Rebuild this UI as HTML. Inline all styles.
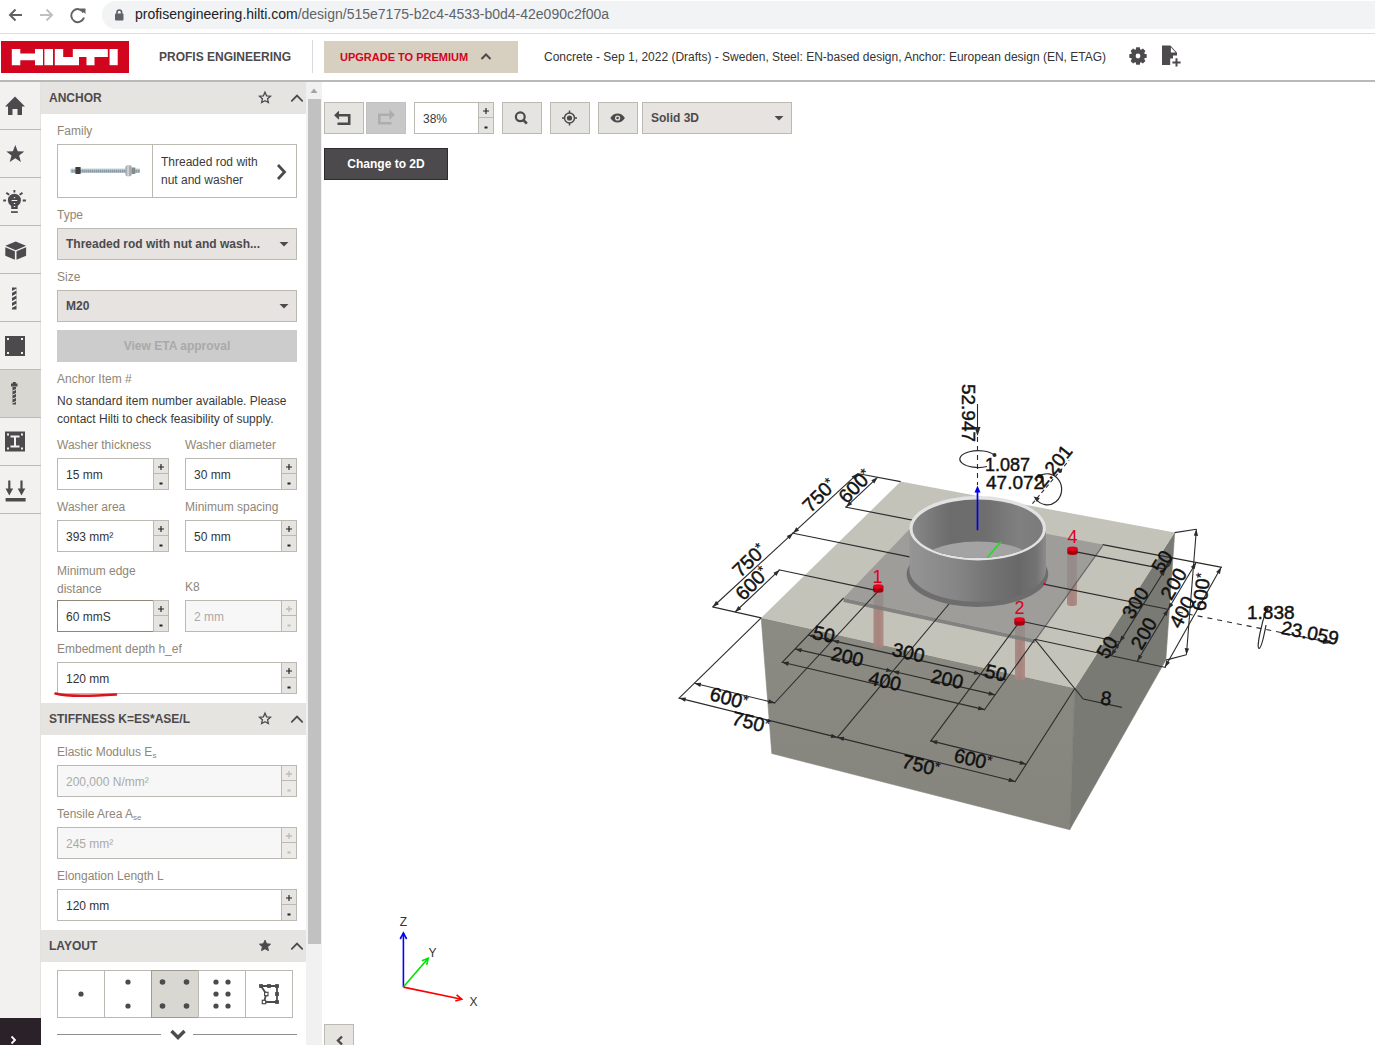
<!DOCTYPE html>
<html><head><meta charset="utf-8">
<style>
*{box-sizing:border-box;margin:0;padding:0}
html,body{width:1375px;height:1045px;overflow:hidden;background:#fff;font-family:"Liberation Sans",sans-serif;color:#333;position:relative;-webkit-font-smoothing:antialiased}
.a{position:absolute}
.chrome{left:0;top:0;width:1375px;height:34px;background:#fff;border-bottom:1px solid #dadce0}
.url{left:102px;top:1px;width:1290px;height:28px;border-radius:14px;background:#f1f3f4}
.urltxt{left:135px;top:6px;font-size:14px;color:#202124;white-space:nowrap;line-height:17px}
.urltxt span{color:#5f6368}
.hdr{left:0;top:34px;width:1375px;height:46px;background:#fff}
.hdrline{left:0;top:80px;width:1375px;height:2px;background:#b9b9b9}
.side{left:0;top:82px;width:41px;height:963px;background:#f2f1ef;border-right:1px solid #e4e2df}
.sep{left:0;width:41px;height:1px;background:#bdbbb7}
.panel{left:41px;top:82px;width:265px;height:963px;background:#fff}
.ph{left:41px;width:265px;height:32px;background:#e6e4e1}
.pht{left:49px;font-size:12px;font-weight:700;color:#4d4a4d;line-height:14px}
.lbl{font-size:12px;color:#8f8677;line-height:14px;white-space:nowrap}
.inp{background:#fff;border:1px solid #bcb8b2}
.val{font-size:12px;color:#3a3a3a;line-height:14px;white-space:nowrap}
.spin{background:#e6e4e1;border-left:1px solid #bcb8b2}
.spin i{position:absolute;left:0;width:100%;text-align:center;font-style:normal;font-weight:700;font-size:11px;color:#222;line-height:12px}
.dd{background:#e6e3e0;border:1px solid #bcb8b2}
.tb{background:#e6e4e1;border:1px solid #bcb8b2}
</style></head><body>

<!-- browser chrome -->
<div class="a chrome"></div>
<svg class="a" style="left:0;top:0" width="100" height="33" viewBox="0 0 100 33">
  <path d="M22 15H10.5M15.5 9.5L10 15l5.5 5.5" fill="none" stroke="#5f6368" stroke-width="2"/>
  <path d="M40 15h11.5M46.5 9.5L52 15l-5.5 5.5" fill="none" stroke="#bdc1c6" stroke-width="2"/>
  <path d="M83.5 12.5A6.5 6.5 0 1 0 84 17.5" fill="none" stroke="#5f6368" stroke-width="2"/>
  <path d="M80 8.5h5.5V14z" fill="#5f6368"/>
</svg>
<div class="a url"></div>
<svg class="a" style="left:113px;top:8px" width="12" height="14" viewBox="0 0 12 14">
  <rect x="2" y="5.5" width="8.5" height="7" rx="1" fill="#5f6368"/>
  <path d="M4 6V4.3a2.3 2.3 0 0 1 4.6 0V6" fill="none" stroke="#5f6368" stroke-width="1.6"/>
</svg>
<div class="a urltxt">profisengineering.hilti.com<span>/design/515e7175-b2c4-4533-b0d4-42e090c2f00a</span></div>

<!-- app header -->
<div class="a hdr"></div>
<div class="a" style="left:1px;top:41px;width:128px;height:32px;background:#d2051e"></div>
<svg class="a" style="left:1px;top:41px" width="128" height="32" viewBox="0 0 128 32">
  <g fill="#fff">
    <path d="M10.8 8h8.5v4.6H34V8h8v16.2h-8v-5H19.3v5h-8.5z"/>
    <rect x="43.4" y="8" width="8.6" height="16.2"/>
    <path d="M53.8 8h8.4v7.9h9.6V8h35v7.9h-13.3v8.3h-8v-8.3H78v8.3H53.8z"/>
    <rect x="108.6" y="8" width="8.1" height="16.2"/>
  </g>
</svg>
<div class="a" style="left:159px;top:50px;font-size:12px;font-weight:700;color:#4d4a4d;white-space:nowrap;line-height:14px">PROFIS ENGINEERING</div>
<div class="a" style="left:312px;top:40px;width:1px;height:33px;background:#d9dbe0"></div>
<div class="a" style="left:324px;top:41px;width:194px;height:32px;background:#d7cfc0"></div>
<div class="a" style="left:340px;top:50px;font-size:11px;font-weight:700;color:#d2051e;white-space:nowrap;line-height:14px">UPGRADE TO PREMIUM</div>
<svg class="a" style="left:479px;top:51px" width="14" height="10" viewBox="0 0 14 10"><path d="M2.5 8l4.5-4.5L11.5 8" fill="none" stroke="#4d4a4d" stroke-width="2"/></svg>
<div class="a" style="left:544px;top:50px;font-size:12px;color:#333;white-space:nowrap;line-height:14px">Concrete - Sep 1, 2022 (Drafts) - Sweden, Steel: EN-based design, Anchor: European design (EN, ETAG)</div>
<svg class="a" style="left:1128.6px;top:46.6px" width="18" height="18" viewBox="0 0 18 18"><path d="M6.76,2.47 L7.23,0.28 L10.77,0.28 L11.24,2.47 L12.03,2.80 L13.92,1.58 L16.42,4.08 L15.20,5.97 L15.53,6.76 L17.72,7.23 L17.72,10.77 L15.53,11.24 L15.20,12.03 L16.42,13.92 L13.92,16.42 L12.03,15.20 L11.24,15.53 L10.77,17.72 L7.23,17.72 L6.76,15.53 L5.97,15.20 L4.08,16.42 L1.58,13.92 L2.80,12.03 L2.47,11.24 L0.28,10.77 L0.28,7.23 L2.47,6.76 L2.80,5.97 L1.58,4.08 L4.08,1.58 L5.97,2.80Z M11.4,9 A2.4,2.4 0 1 0 6.6,9 A2.4,2.4 0 1 0 11.4,9Z" fill="#4d4a4d" fill-rule="evenodd"/></svg>
<svg class="a" style="left:1160px;top:44px" width="24" height="24" viewBox="0 0 24 24"><path d="M2 1.6h8.4L17 8.8v2.8h-4v3h-2.8V21H2z" fill="#4d4a4d"/><path d="M10.9 3.3v5.1h4.7z" fill="#fff"/><path d="M16.5 14.3v8.2M12.4 18.4h8.2" stroke="#4d4a4d" stroke-width="2"/></svg>
<div class="a hdrline"></div>

<!-- sidebar -->
<div class="a side"></div>
<div class="a" style="left:0;top:369px;width:41px;height:48px;background:#d8d7d2"></div>
<div class="a sep" style="top:129px"></div>
<div class="a sep" style="top:177px"></div>
<div class="a sep" style="top:225px"></div>
<div class="a sep" style="top:273px"></div>
<div class="a sep" style="top:321px"></div>
<div class="a sep" style="top:369px"></div>
<div class="a sep" style="top:417px"></div>
<div class="a sep" style="top:465px"></div>
<div class="a sep" style="top:513px"></div>
<div class="a" style="left:0;top:1018px;width:41px;height:27px;background:#2a2228"></div>


<svg class="a" style="left:0;top:82px" width="41" height="440" viewBox="0 0 41 440" fill="#4d4a4d">
  <!-- home: center (15,106) -> local y 24 -->
  <path d="M15 14.5L5 24.5h3v8.5h4.5v-6h5v6H22v-8.5h3z"/>
  <!-- star center (15,154)-> local 72 -->
  <path d="M15.3 63l2.4 6.2 6.6.3-5.2 4.1 1.8 6.4-5.6-3.7-5.6 3.7 1.8-6.4-5.2-4.1 6.6-.3z"/>
  <!-- bulb -->
  <g>
    <circle cx="14.4" cy="118.2" r="6.5"/>
    <rect x="11.2" y="121" width="6.5" height="6"/>
    <rect x="11" y="129.2" width="6.8" height="1.7"/>
    <path d="M14.4 108v2.6M6.3 110.9l2.9 1.9M22.5 110.9l-2.9 1.9M3.2 118.5H6M22.7 118.5h3.2" stroke="#4d4a4d" stroke-width="1.9"/>
    <path d="M11.6 118.5h5.6M13.8 115.7h1.4M13.8 121.5h1.4M13.8 124.5h1.4" stroke="#f2f1ef" stroke-width="1.1"/>
  </g>
  <!-- box center (15.7,250.7) local 168.7 -->
  <path d="M15.7 159.5l10.3 4.3-10.3 4.4-10.3-4.4z"/>
  <path d="M5.3 165.2l9.6 4.1v8.5l-9.6-4.1z"/>
  <path d="M26.1 165.2l-9.6 4.1v8.5l9.6-4.1z"/>
  <!-- drill center (14.5,298) local 216 -->
  <path d="M12 205.5h4.5v22H12z"/>
  <path d="M12 210l4.5-2.5M12 215l4.5-2.5M12 220l4.5-2.5M12 225l4.5-2.5" stroke="#f2f1ef" stroke-width="1.5"/>
  <!-- plate center (15,346) local 264 -->
  <rect x="5" y="254" width="20" height="20"/>
  <g fill="#f2f1ef"><rect x="7" y="256" width="2" height="2"/><rect x="21" y="256" width="2" height="2"/><rect x="7" y="270" width="2" height="2"/><rect x="21" y="270" width="2" height="2"/></g>
  <!-- anchor icon center (14.3,394) local 312 -->
  <rect x="11" y="301.5" width="6.5" height="3"/>
  <rect x="12.8" y="300" width="3" height="4"/>
  <path d="M12.5 305h3.5v17.5h-3.5z"/>
  <path d="M12.5 309l3.5-1.5M12.5 313l3.5-1.5M12.5 317l3.5-1.5M12.5 321l3.5-1.5" stroke="#d8d7d2" stroke-width="1"/>
  <!-- I-profile center (15,441.5) local 359.5 -->
  <rect x="5" y="349.5" width="20" height="20"/>
  <g fill="#f2f1ef"><rect x="7" y="351.5" width="2" height="2"/><rect x="21" y="351.5" width="2" height="2"/><rect x="7" y="365.5" width="2" height="2"/><rect x="21" y="365.5" width="2" height="2"/>
  <rect x="10.5" y="353.5" width="9" height="2"/><rect x="10.5" y="363.5" width="9" height="2"/><rect x="14" y="355" width="2" height="9"/></g>
  <!-- loads center (15.6,490.4) local 408 -->
  <rect x="5.6" y="416" width="20" height="3.5"/>
  <path d="M9.3 398.5v9M21.5 398.5v9" stroke="#4d4a4d" stroke-width="2.2"/>
  <path d="M5.5 406.5h7.6L9.3 413.5zM17.7 406.5h7.6l-3.8 7z"/>
</svg>
<svg class="a" style="left:0;top:1018px" width="41" height="27" viewBox="0 0 41 27"><path d="M11.5 18.5l3.5 3.5-3.5 3.5" fill="none" stroke="#fff" stroke-width="1.8"/></svg>

<!-- panel -->
<div class="a panel"></div>


<!-- panel content -->
<div class="a ph" style="top:82px"></div>
<div class="a pht" style="top:91px">ANCHOR</div>
<svg class="a" style="left:257px;top:90px" width="48" height="16" viewBox="0 0 48 16">
  <path d="M8 2.2l1.6 3.6 3.9.4-2.9 2.6.8 3.8L8 10.7l-3.4 1.9.8-3.8L2.5 6.2l3.9-.4z" fill="none" stroke="#4d4a4d" stroke-width="1.3" stroke-linejoin="miter"/>
  <path d="M34.8 10.8l5.2-5.2 5.2 5.2" fill="none" stroke="#4d4a4d" stroke-width="1.8" stroke-linecap="round"/>
</svg>

<div class="a lbl" style="left:57px;top:124px">Family</div>
<div class="a" style="left:57px;top:144px;width:240px;height:54px;border:1px solid #bcb8b2;background:#fff"></div>
<div class="a" style="left:152px;top:144px;width:1px;height:54px;background:#bcb8b2"></div>
<svg class="a" style="left:70px;top:162px" width="74" height="16" viewBox="0 0 74 16">
  <defs><pattern id="thr" width="2" height="4" patternUnits="userSpaceOnUse"><rect width="2" height="4" fill="#a3b5be"/><rect width="1" height="4" fill="#8a9ca5"/></pattern></defs>
  <rect x="0.7" y="6.8" width="69.3" height="4" fill="url(#thr)"/>
  <rect x="0.7" y="6.8" width="69.3" height="1" fill="#c9d6dc" opacity="0.8"/>
  <rect x="5.4" y="5" width="5.2" height="7" fill="#3e3e3e"/>
  <rect x="55.4" y="3.3" width="6.4" height="11" rx="2" fill="#a9adb0"/>
  <rect x="57.3" y="3.3" width="1.5" height="11" fill="#d7dadc"/>
  <rect x="61.8" y="5.5" width="3.5" height="6.5" fill="#848b8f"/>
</svg>
<div class="a val" style="left:161px;top:153px;line-height:18px">Threaded rod with<br>nut and washer</div>
<svg class="a" style="left:274px;top:162px" width="16" height="20" viewBox="0 0 16 20"><path d="M4 3l6.5 7L4 17" fill="none" stroke="#4d4a4d" stroke-width="2.8"/></svg>

<div class="a lbl" style="left:57px;top:208px">Type</div>
<div class="a dd" style="left:57px;top:228px;width:240px;height:32px"></div>
<div class="a val" style="left:66px;top:237px;font-weight:700;color:#4d4a4d">Threaded rod with nut and wash...</div>
<svg class="a" style="left:278px;top:240px" width="12" height="8" viewBox="0 0 12 8"><path d="M1.5 2h9L6 6.5z" fill="#4d4a4d"/></svg>

<div class="a lbl" style="left:57px;top:270px">Size</div>
<div class="a dd" style="left:57px;top:290px;width:240px;height:32px"></div>
<div class="a val" style="left:66px;top:299px;font-weight:700;color:#4d4a4d">M20</div>
<svg class="a" style="left:278px;top:302px" width="12" height="8" viewBox="0 0 12 8"><path d="M1.5 2h9L6 6.5z" fill="#4d4a4d"/></svg>

<div class="a" style="left:57px;top:330px;width:240px;height:32px;background:#cccccc"></div>
<div class="a val" style="left:57px;top:339px;width:240px;text-align:center;font-weight:700;color:#a9a9a9">View ETA approval</div>

<div class="a lbl" style="left:57px;top:372px">Anchor Item #</div>
<div class="a val" style="left:57px;top:392px;line-height:18px">No standard item number available. Please<br>contact Hilti to check feasibility of supply.</div>
<div class="a lbl" style="left:57px;top:438px">Washer thickness</div>
<div class="a lbl" style="left:185px;top:438px">Washer diameter</div>
<div class="a inp" style="left:57px;top:458px;width:112px;height:32px;background:#fff;border-color:#bcb8b2"></div>
<div class="a val" style="left:66px;top:468px;color:#333">15 mm</div>
<div class="a" style="left:153px;top:458px;width:16px;height:32px;background:#e6e4e1;border:1px solid #bcb8b2"></div>
<div class="a" style="left:153px;top:473px;width:16px;height:1px;background:#bcb8b2"></div>
<svg class="a" style="left:153px;top:458px" width="16" height="32" viewBox="0 0 16 32"><path d="M5 9h6M8 6v6" stroke="#222" stroke-width="1.15"/><path d="M6.5 25.5h3" stroke="#222" stroke-width="2"/></svg>
<div class="a inp" style="left:185px;top:458px;width:112px;height:32px;background:#fff;border-color:#bcb8b2"></div>
<div class="a val" style="left:194px;top:468px;color:#333">30 mm</div>
<div class="a" style="left:281px;top:458px;width:16px;height:32px;background:#e6e4e1;border:1px solid #bcb8b2"></div>
<div class="a" style="left:281px;top:473px;width:16px;height:1px;background:#bcb8b2"></div>
<svg class="a" style="left:281px;top:458px" width="16" height="32" viewBox="0 0 16 32"><path d="M5 9h6M8 6v6" stroke="#222" stroke-width="1.15"/><path d="M6.5 25.5h3" stroke="#222" stroke-width="2"/></svg>
<div class="a lbl" style="left:57px;top:500px">Washer area</div>
<div class="a lbl" style="left:185px;top:500px">Minimum spacing</div>
<div class="a inp" style="left:57px;top:520px;width:112px;height:32px;background:#fff;border-color:#bcb8b2"></div>
<div class="a val" style="left:66px;top:530px;color:#333">393 mm&sup2;</div>
<div class="a" style="left:153px;top:520px;width:16px;height:32px;background:#e6e4e1;border:1px solid #bcb8b2"></div>
<div class="a" style="left:153px;top:535px;width:16px;height:1px;background:#bcb8b2"></div>
<svg class="a" style="left:153px;top:520px" width="16" height="32" viewBox="0 0 16 32"><path d="M5 9h6M8 6v6" stroke="#222" stroke-width="1.15"/><path d="M6.5 25.5h3" stroke="#222" stroke-width="2"/></svg>
<div class="a inp" style="left:185px;top:520px;width:112px;height:32px;background:#fff;border-color:#bcb8b2"></div>
<div class="a val" style="left:194px;top:530px;color:#333">50 mm</div>
<div class="a" style="left:281px;top:520px;width:16px;height:32px;background:#e6e4e1;border:1px solid #bcb8b2"></div>
<div class="a" style="left:281px;top:535px;width:16px;height:1px;background:#bcb8b2"></div>
<svg class="a" style="left:281px;top:520px" width="16" height="32" viewBox="0 0 16 32"><path d="M5 9h6M8 6v6" stroke="#222" stroke-width="1.15"/><path d="M6.5 25.5h3" stroke="#222" stroke-width="2"/></svg>
<div class="a lbl" style="left:57px;top:562px;line-height:18px">Minimum edge<br>distance</div>
<div class="a lbl" style="left:185px;top:580px">K8</div>
<div class="a inp" style="left:57px;top:600px;width:112px;height:32px;background:#fff;border-color:#8f8677"></div>
<div class="a val" style="left:66px;top:610px;color:#333">60 mmS</div>
<div class="a" style="left:153px;top:600px;width:16px;height:32px;background:#e6e4e1;border:1px solid #bcb8b2"></div>
<div class="a" style="left:153px;top:615px;width:16px;height:1px;background:#bcb8b2"></div>
<svg class="a" style="left:153px;top:600px" width="16" height="32" viewBox="0 0 16 32"><path d="M5 9h6M8 6v6" stroke="#222" stroke-width="1.15"/><path d="M6.5 25.5h3" stroke="#222" stroke-width="2"/></svg>
<div class="a inp" style="left:185px;top:600px;width:112px;height:32px;background:#f7f7f7;border-color:#bcb8b2"></div>
<div class="a val" style="left:194px;top:610px;color:#aaa">2 mm</div>
<div class="a" style="left:281px;top:600px;width:16px;height:32px;background:#ecebe8;border:1px solid #bcb8b2"></div>
<div class="a" style="left:281px;top:615px;width:16px;height:1px;background:#bcb8b2"></div>
<svg class="a" style="left:281px;top:600px" width="16" height="32" viewBox="0 0 16 32"><path d="M5 9h6M8 6v6" stroke="#bbb" stroke-width="1.3"/><path d="M6.5 25.5h3" stroke="#bbb" stroke-width="2"/></svg>
<div class="a lbl" style="left:57px;top:642px">Embedment depth h_ef</div>
<div class="a inp" style="left:57px;top:662px;width:240px;height:32px;background:#fff;border-color:#bcb8b2"></div>
<div class="a val" style="left:66px;top:672px;color:#333">120 mm</div>
<div class="a" style="left:281px;top:662px;width:16px;height:32px;background:#e6e4e1;border:1px solid #bcb8b2"></div>
<div class="a" style="left:281px;top:677px;width:16px;height:1px;background:#bcb8b2"></div>
<svg class="a" style="left:281px;top:662px" width="16" height="32" viewBox="0 0 16 32"><path d="M5 9h6M8 6v6" stroke="#222" stroke-width="1.15"/><path d="M6.5 25.5h3" stroke="#222" stroke-width="2"/></svg>
<svg class="a" style="left:52px;top:688px" width="70" height="12" viewBox="0 0 70 12"><path d="M3.5 5.5C14 8.5 40 8 64 6.5" fill="none" stroke="#d8141c" stroke-width="2.6" stroke-linecap="round"/></svg>
<div class="a ph" style="top:703px"></div>
<div class="a pht" style="top:712px">STIFFNESS K=ES*ASE/L</div>
<svg class="a" style="left:257px;top:711px" width="48" height="16" viewBox="0 0 48 16">
  <path d="M8 2.2l1.6 3.6 3.9.4-2.9 2.6.8 3.8L8 10.7l-3.4 1.9.8-3.8L2.5 6.2l3.9-.4z" fill="none" stroke="#4d4a4d" stroke-width="1.3"/>
  <path d="M34.8 10.8l5.2-5.2 5.2 5.2" fill="none" stroke="#4d4a4d" stroke-width="1.8" stroke-linecap="round"/>
</svg>
<div class="a lbl" style="left:57px;top:745px">Elastic Modulus E<sub style="font-size:8px;vertical-align:-2px">s</sub></div>
<div class="a inp" style="left:57px;top:765px;width:240px;height:32px;background:#f7f7f7;border-color:#bcb8b2"></div>
<div class="a val" style="left:66px;top:775px;color:#aaa">200,000 N/mm&sup2;</div>
<div class="a" style="left:281px;top:765px;width:16px;height:32px;background:#ecebe8;border:1px solid #bcb8b2"></div>
<div class="a" style="left:281px;top:780px;width:16px;height:1px;background:#bcb8b2"></div>
<svg class="a" style="left:281px;top:765px" width="16" height="32" viewBox="0 0 16 32"><path d="M5 9h6M8 6v6" stroke="#bbb" stroke-width="1.3"/><path d="M6.5 25.5h3" stroke="#bbb" stroke-width="2"/></svg>
<div class="a lbl" style="left:57px;top:807px">Tensile Area A<sub style="font-size:8px;vertical-align:-2px">se</sub></div>
<div class="a inp" style="left:57px;top:827px;width:240px;height:32px;background:#f7f7f7;border-color:#bcb8b2"></div>
<div class="a val" style="left:66px;top:837px;color:#aaa">245 mm&sup2;</div>
<div class="a" style="left:281px;top:827px;width:16px;height:32px;background:#ecebe8;border:1px solid #bcb8b2"></div>
<div class="a" style="left:281px;top:842px;width:16px;height:1px;background:#bcb8b2"></div>
<svg class="a" style="left:281px;top:827px" width="16" height="32" viewBox="0 0 16 32"><path d="M5 9h6M8 6v6" stroke="#bbb" stroke-width="1.3"/><path d="M6.5 25.5h3" stroke="#bbb" stroke-width="2"/></svg>
<div class="a lbl" style="left:57px;top:869px">Elongation Length L</div>
<div class="a inp" style="left:57px;top:889px;width:240px;height:32px;background:#fff;border-color:#bcb8b2"></div>
<div class="a val" style="left:66px;top:899px;color:#333">120 mm</div>
<div class="a" style="left:281px;top:889px;width:16px;height:32px;background:#e6e4e1;border:1px solid #bcb8b2"></div>
<div class="a" style="left:281px;top:904px;width:16px;height:1px;background:#bcb8b2"></div>
<svg class="a" style="left:281px;top:889px" width="16" height="32" viewBox="0 0 16 32"><path d="M5 9h6M8 6v6" stroke="#222" stroke-width="1.15"/><path d="M6.5 25.5h3" stroke="#222" stroke-width="2"/></svg>
<div class="a ph" style="top:930px"></div>
<div class="a pht" style="top:939px">LAYOUT</div>
<svg class="a" style="left:257px;top:938px" width="48" height="16" viewBox="0 0 48 16">
  <path d="M8 2.2l1.6 3.6 3.9.4-2.9 2.6.8 3.8L8 10.7l-3.4 1.9.8-3.8L2.5 6.2l3.9-.4z" fill="#4d4a4d" stroke="#4d4a4d" stroke-width="1"/>
  <path d="M34.8 10.8l5.2-5.2 5.2 5.2" fill="none" stroke="#4d4a4d" stroke-width="1.8" stroke-linecap="round"/>
</svg>
<div class="a" style="left:57px;top:970px;width:236px;height:48px;border:1px solid #bcb8b2;background:#fff"></div>
<div class="a" style="left:151px;top:970px;width:48px;height:48px;border:1px solid #a09a90;background:#d8d7d2"></div>
<div class="a" style="left:104px;top:970px;width:1px;height:48px;background:#bcb8b2"></div>
<div class="a" style="left:198px;top:970px;width:1px;height:48px;background:#bcb8b2"></div>
<div class="a" style="left:245px;top:970px;width:1px;height:48px;background:#bcb8b2"></div>
<svg class="a" style="left:57px;top:970px" width="240" height="48" viewBox="0 0 240 48" fill="#4d4a4d">
  <circle cx="24" cy="24" r="2.6"/>
  <circle cx="71" cy="12" r="2.6"/><circle cx="71" cy="36" r="2.6"/>
  <circle cx="105.5" cy="12" r="2.8"/><circle cx="129.5" cy="12" r="2.8"/><circle cx="105.5" cy="36" r="2.8"/><circle cx="129.5" cy="36" r="2.8"/>
  <circle cx="159" cy="12" r="2.6"/><circle cx="171" cy="12" r="2.6"/><circle cx="159" cy="24" r="2.6"/><circle cx="171" cy="24" r="2.6"/><circle cx="159" cy="36" r="2.6"/><circle cx="171" cy="36" r="2.6"/>
  <path d="M204 16H220V32H207L209.3 24Z" fill="none" stroke="#4d4a4d" stroke-width="1.8" stroke-linejoin="round"/>
  <rect x="202.1" y="14.1" width="3.8" height="3.8"/><rect x="210.1" y="14.1" width="3.8" height="3.8"/><rect x="218.1" y="14.1" width="3.8" height="3.8"/><rect x="218.1" y="22.1" width="3.8" height="3.8"/><rect x="218.1" y="30.1" width="3.8" height="3.8"/>
  <rect x="205.3" y="30.3" width="3.4" height="3.4" fill="#fff" stroke="#4d4a4d" stroke-width="1.2"/><rect x="207.6" y="22.3" width="3.4" height="3.4" fill="#fff" stroke="#4d4a4d" stroke-width="1.2"/>
</svg>
<div class="a" style="left:57px;top:1034px;width:104px;height:1px;background:#8f8f8f"></div>
<div class="a" style="left:193px;top:1034px;width:104px;height:1px;background:#8f8f8f"></div>
<svg class="a" style="left:168px;top:1028px" width="20" height="14" viewBox="0 0 20 14"><path d="M3.5 3L10 9.5l6.5-6.5" fill="none" stroke="#4d4a4d" stroke-width="3.4"/></svg>


<!--SCENE-->
<svg class="a" style="left:0;top:0" width="1375" height="1045" viewBox="0 0 1375 1045" font-family="Liberation Sans, sans-serif">
<defs><linearGradient id="lf" x1="0" y1="0" x2="0" y2="1"><stop offset="0" stop-color="#8b8b84"/><stop offset="1" stop-color="#85857e"/></linearGradient><linearGradient id="cyl" x1="0" y1="0" x2="1" y2="0"><stop offset="0" stop-color="#959595"/><stop offset="0.35" stop-color="#858585"/><stop offset="0.55" stop-color="#767676"/><stop offset="0.8" stop-color="#686868"/><stop offset="0.93" stop-color="#737373"/><stop offset="1" stop-color="#8c8c8c"/></linearGradient><linearGradient id="cyli" x1="0" y1="0" x2="1" y2="0"><stop offset="0" stop-color="#8a8a8a"/><stop offset="0.3" stop-color="#6c6c6c"/><stop offset="0.55" stop-color="#6e6e6e"/><stop offset="0.8" stop-color="#808080"/><stop offset="1" stop-color="#7a7a7a"/></linearGradient><linearGradient id="rod" x1="0" y1="0" x2="1" y2="0"><stop offset="0" stop-color="#a98780"/><stop offset="0.5" stop-color="#a3817a"/><stop offset="1" stop-color="#ad8b84"/></linearGradient></defs>
<polygon points="761.2,617.9 1074.9,688.3 1069.7,829.7 771.8,753.5" fill="url(#lf)" stroke="#878780" stroke-width="0.6"/>
<polygon points="1074.9,688.3 1174.7,532.6 1165.8,660.1 1069.7,829.7" fill="#797a73" stroke="#797a73" stroke-width="0.6"/>
<polygon points="761.2,617.9 1074.9,688.3 1174.7,532.6 900.6,481.6" fill="#c4c3ba"/>
<path d="M873.5,590 V646 A5 2 0 0 0 883.5,646 V590 Z" fill="url(#rod)" opacity="0.95"/>
<path d="M1015,621 V678 A5 2 0 0 0 1025,678 V621 Z" fill="url(#rod)" opacity="0.95"/>
<path d="M1067,551 V604 A5 2 0 0 0 1077,604 V551 Z" fill="url(#rod)" opacity="0.95"/>
<polygon points="843.6,598.0 1034.9,639.3 1034.9,643.3 843.6,602.0" fill="#7d7d7b" opacity="0.92"/>
<polygon points="1034.9,639.3 1102.6,544.6 1102.6,547.1 1034.9,641.8" fill="#646462" opacity="0.95"/>
<polygon points="843.6,598.0 1034.9,639.3 1102.6,544.6 926.8,510.9" fill="#8f8f8e" opacity="0.72"/>
<line x1="712.7" y1="607.0" x2="793.0" y2="533.2" stroke="#2b2b2b" stroke-width="1.1" />
<polygon points="712.7,607.0 716.0,601.0 719.0,604.2" fill="#2b2b2b"/>
<polygon points="793.0,533.2 789.7,539.2 786.7,536.0" fill="#2b2b2b"/>
<line x1="793.0" y1="533.2" x2="857.7" y2="473.6" stroke="#2b2b2b" stroke-width="1.1" />
<polygon points="793.0,533.2 796.3,527.2 799.2,530.4" fill="#2b2b2b"/>
<polygon points="857.7,473.6 854.5,479.6 851.5,476.4" fill="#2b2b2b"/>
<line x1="735.1" y1="612.0" x2="779.6" y2="569.9" stroke="#2b2b2b" stroke-width="1.1" />
<polygon points="735.1,612.0 738.3,606.0 741.3,609.2" fill="#2b2b2b"/>
<polygon points="779.6,569.9 776.4,576.0 773.4,572.8" fill="#2b2b2b"/>
<line x1="845.9" y1="507.2" x2="877.6" y2="477.3" stroke="#2b2b2b" stroke-width="1.1" />
<polygon points="845.9,507.2 849.2,501.1 852.2,504.3" fill="#2b2b2b"/>
<polygon points="877.6,477.3 874.3,483.4 871.3,480.2" fill="#2b2b2b"/>
<line x1="761.2" y1="617.9" x2="712.4" y2="606.9" stroke="#2b2b2b" stroke-width="1.1" />
<line x1="900.6" y1="481.6" x2="857.4" y2="473.5" stroke="#2b2b2b" stroke-width="1.1" />
<line x1="919.4" y1="558.9" x2="791.9" y2="533.0" stroke="#2b2b2b" stroke-width="1.1" />
<line x1="878.3" y1="590.9" x2="778.7" y2="569.7" stroke="#2b2b2b" stroke-width="1.1" />
<line x1="950.9" y1="527.6" x2="845.1" y2="507.0" stroke="#2b2b2b" stroke-width="1.1" />
<line x1="808.2" y1="635.1" x2="832.4" y2="640.6" stroke="#2b2b2b" stroke-width="1.1" />
<polygon points="808.2,635.1 815.0,634.4 814.1,638.7" fill="#2b2b2b"/>
<polygon points="832.4,640.6 825.6,641.3 826.5,637.0" fill="#2b2b2b"/>
<line x1="832.4" y1="640.6" x2="980.6" y2="674.1" stroke="#2b2b2b" stroke-width="1.1" />
<polygon points="832.4,640.6 839.2,639.9 838.2,644.1" fill="#2b2b2b"/>
<polygon points="980.6,674.1 973.8,674.8 974.8,670.5" fill="#2b2b2b"/>
<line x1="980.6" y1="674.1" x2="1005.9" y2="679.8" stroke="#2b2b2b" stroke-width="1.1" />
<polygon points="980.6,674.1 987.5,673.4 986.5,677.7" fill="#2b2b2b"/>
<polygon points="1005.9,679.8 999.1,680.5 1000.1,676.2" fill="#2b2b2b"/>
<line x1="795.1" y1="648.9" x2="892.7" y2="671.3" stroke="#2b2b2b" stroke-width="1.1" />
<polygon points="795.1,648.9 801.9,648.2 800.9,652.5" fill="#2b2b2b"/>
<polygon points="892.7,671.3 885.9,672.0 886.9,667.7" fill="#2b2b2b"/>
<line x1="892.7" y1="671.3" x2="995.2" y2="694.9" stroke="#2b2b2b" stroke-width="1.1" />
<polygon points="892.7,671.3 899.5,670.6 898.5,674.9" fill="#2b2b2b"/>
<polygon points="995.2,694.9 988.3,695.6 989.3,691.3" fill="#2b2b2b"/>
<line x1="782.2" y1="662.3" x2="984.6" y2="709.6" stroke="#2b2b2b" stroke-width="1.1" />
<polygon points="782.2,662.3 789.0,661.6 788.0,665.9" fill="#2b2b2b"/>
<polygon points="984.6,709.6 977.8,710.3 978.8,706.0" fill="#2b2b2b"/>
<line x1="694.4" y1="683.3" x2="774.8" y2="702.9" stroke="#2b2b2b" stroke-width="1.1" />
<polygon points="694.4,683.3 701.2,682.7 700.2,687.0" fill="#2b2b2b"/>
<polygon points="774.8,702.9 767.9,703.5 769.0,699.2" fill="#2b2b2b"/>
<line x1="930.8" y1="740.9" x2="1026.3" y2="764.2" stroke="#2b2b2b" stroke-width="1.1" />
<polygon points="930.8,740.9 937.7,740.3 936.6,744.6" fill="#2b2b2b"/>
<polygon points="1026.3,764.2 1019.4,764.8 1020.5,760.5" fill="#2b2b2b"/>
<line x1="679.2" y1="698.1" x2="837.5" y2="737.4" stroke="#2b2b2b" stroke-width="1.1" />
<polygon points="679.2,698.1 686.1,697.5 685.0,701.8" fill="#2b2b2b"/>
<polygon points="837.5,737.4 830.7,738.0 831.7,733.7" fill="#2b2b2b"/>
<line x1="837.5" y1="737.4" x2="1015.2" y2="781.5" stroke="#2b2b2b" stroke-width="1.1" />
<polygon points="837.5,737.4 844.3,736.8 843.3,741.1" fill="#2b2b2b"/>
<polygon points="1015.2,781.5 1008.3,782.1 1009.4,777.8" fill="#2b2b2b"/>
<line x1="843.6" y1="598.0" x2="781.7" y2="662.9" stroke="#2b2b2b" stroke-width="1.1" />
<line x1="1034.9" y1="639.3" x2="984.1" y2="710.3" stroke="#2b2b2b" stroke-width="1.1" />
<line x1="878.3" y1="590.9" x2="774.2" y2="703.5" stroke="#2b2b2b" stroke-width="1.1" />
<line x1="1020.2" y1="621.0" x2="930.3" y2="741.6" stroke="#2b2b2b" stroke-width="1.1" />
<line x1="950.2" y1="602.5" x2="836.9" y2="738.1" stroke="#2b2b2b" stroke-width="1.1" />
<line x1="761.2" y1="617.9" x2="678.6" y2="698.7" stroke="#2b2b2b" stroke-width="1.1" />
<line x1="1074.9" y1="688.3" x2="1014.7" y2="782.2" stroke="#2b2b2b" stroke-width="1.1" />
<line x1="1111.2" y1="655.7" x2="1119.7" y2="642.1" stroke="#2b2b2b" stroke-width="1.1" />
<polygon points="1111.2,655.7 1112.8,649.0 1116.5,651.4" fill="#2b2b2b"/>
<polygon points="1119.7,642.1 1118.1,648.8 1114.4,646.4" fill="#2b2b2b"/>
<line x1="1119.7" y1="642.1" x2="1165.3" y2="569.2" stroke="#2b2b2b" stroke-width="1.1" />
<polygon points="1119.7,642.1 1121.3,635.4 1125.0,637.7" fill="#2b2b2b"/>
<polygon points="1165.3,569.2 1163.7,575.9 1160.0,573.6" fill="#2b2b2b"/>
<line x1="1165.3" y1="569.2" x2="1172.3" y2="557.9" stroke="#2b2b2b" stroke-width="1.1" />
<polygon points="1165.3,569.2 1166.8,562.6 1170.6,564.9" fill="#2b2b2b"/>
<polygon points="1172.3,557.9 1170.8,564.6 1167.0,562.3" fill="#2b2b2b"/>
<line x1="1137.2" y1="661.3" x2="1168.2" y2="609.3" stroke="#2b2b2b" stroke-width="1.1" />
<polygon points="1137.2,661.3 1138.7,654.6 1142.4,656.8" fill="#2b2b2b"/>
<polygon points="1168.2,609.3 1166.7,616.0 1163.0,613.8" fill="#2b2b2b"/>
<line x1="1168.2" y1="609.3" x2="1196.1" y2="562.5" stroke="#2b2b2b" stroke-width="1.1" />
<polygon points="1168.2,609.3 1169.6,602.6 1173.4,604.9" fill="#2b2b2b"/>
<polygon points="1196.1,562.5 1194.6,569.2 1190.8,566.9" fill="#2b2b2b"/>
<line x1="1164.9" y1="667.3" x2="1221.2" y2="567.3" stroke="#2b2b2b" stroke-width="1.1" />
<polygon points="1164.9,667.3 1166.2,660.5 1170.0,662.7" fill="#2b2b2b"/>
<polygon points="1221.2,567.3 1220.0,574.0 1216.1,571.9" fill="#2b2b2b"/>
<line x1="1034.9" y1="639.3" x2="1165.8" y2="667.5" stroke="#2b2b2b" stroke-width="1.1" />
<line x1="1102.6" y1="544.6" x2="1222.0" y2="567.4" stroke="#2b2b2b" stroke-width="1.1" />
<line x1="1020.2" y1="621.0" x2="1120.6" y2="642.3" stroke="#2b2b2b" stroke-width="1.1" />
<line x1="1072.2" y1="551.1" x2="1166.1" y2="569.4" stroke="#2b2b2b" stroke-width="1.1" />
<line x1="1038.7" y1="583.1" x2="1169.0" y2="609.5" stroke="#2b2b2b" stroke-width="1.1" />
<line x1="1174.7" y1="532.6" x2="1196.4" y2="529.2" stroke="#2b2b2b" stroke-width="1.1" />
<line x1="1165.8" y1="660.1" x2="1186.4" y2="654.8" stroke="#2b2b2b" stroke-width="1.1" />
<line x1="1196.4" y1="529.2" x2="1186.4" y2="654.8" stroke="#2b2b2b" stroke-width="1.1" />
<polygon points="1196.4,529.2 1198.1,535.9 1193.7,535.5" fill="#2b2b2b"/>
<polygon points="1186.4,654.8 1184.7,648.1 1189.1,648.5" fill="#2b2b2b"/>
<line x1="1034.9" y1="639.3" x2="1083.2" y2="699.0" stroke="#2b2b2b" stroke-width="1.1" />
<line x1="1083.2" y1="699.0" x2="1122.0" y2="707.4" stroke="#2b2b2b" stroke-width="1.1" />
<ellipse cx="977.4000000000001" cy="574.3" rx="70.8" ry="32.6" fill="#6d6d6d"/>
<path d="M909.4000000000001,528.2 V569.7 A68.3 32.2 0 0 0 1046.0,569.7 V528.2 A68.3 32.2 0 0 1 909.4000000000001,528.2 Z" fill="url(#cyl)"/>
<ellipse cx="977.7" cy="528.2" rx="68.3" ry="32.2" fill="#e2e2e2"/>
<clipPath id="inn"><ellipse cx="977.7" cy="528.8000000000001" rx="65.1" ry="29.300000000000004"/></clipPath>
<g clip-path="url(#inn)"><rect x="909.4000000000001" y="496.00000000000006" width="136.6" height="74.4" fill="url(#cyli)"/><ellipse cx="977.7" cy="571.2" rx="65.3" ry="29.700000000000003" fill="#a3a3a3"/></g>
<circle cx="1044.5" cy="584" r="1.3" fill="#e0001a"/>
<line x1="987.0" y1="557.7" x2="1000.9" y2="541.9" stroke="#22dd22" stroke-width="1.6" />
<line x1="977.5" y1="530.2" x2="977.5" y2="490.0" stroke="#0000ee" stroke-width="1.7" />
<polygon points="977.5,485.4 980.5,492.4 974.5,492.4" fill="#0000ee"/>
<path d="M873.0,586.5 V590.5 A5.2 2.2 0 0 0 883.4000000000001,590.5 V586.5 Z" fill="#a5000f"/>
<ellipse cx="878.2" cy="586.5" rx="5.2" ry="2.2" fill="#e6001a"/>
<path d="M1014.3,619.5 V623.5 A5.2 2.2 0 0 0 1024.7,623.5 V619.5 Z" fill="#a5000f"/>
<ellipse cx="1019.5" cy="619.5" rx="5.2" ry="2.2" fill="#e6001a"/>
<path d="M1067.3,548.8 V552.8 A5.2 2.2 0 0 0 1077.7,552.8 V548.8 Z" fill="#a5000f"/>
<ellipse cx="1072.5" cy="548.8" rx="5.2" ry="2.2" fill="#e6001a"/>
<text x="877.5" y="583" font-size="18" fill="#e0001a" text-anchor="middle">1</text>
<text x="1019.5" y="614" font-size="18" fill="#e0001a" text-anchor="middle">2</text>
<text x="1072.5" y="543" font-size="18" fill="#e0001a" text-anchor="middle">4</text>
<text transform="translate(819,495) rotate(-45)" font-size="19.5" fill="#111" stroke="#111" stroke-width="0.45" text-anchor="middle" dominant-baseline="central">750<tspan font-size="14" stroke-width="0.2" dy="-2.5">*</tspan></text>
<text transform="translate(855,486) rotate(-46)" font-size="19.5" fill="#111" stroke="#111" stroke-width="0.45" text-anchor="middle" dominant-baseline="central">600<tspan font-size="14" stroke-width="0.2" dy="-2.5">*</tspan></text>
<text transform="translate(749,560) rotate(-44)" font-size="19.5" fill="#111" stroke="#111" stroke-width="0.45" text-anchor="middle" dominant-baseline="central">750<tspan font-size="14" stroke-width="0.2" dy="-2.5">*</tspan></text>
<text transform="translate(752,583) rotate(-45)" font-size="19.5" fill="#111" stroke="#111" stroke-width="0.45" text-anchor="middle" dominant-baseline="central">600<tspan font-size="14" stroke-width="0.2" dy="-2.5">*</tspan></text>
<text transform="translate(729,698) rotate(15)" font-size="19.5" fill="#111" stroke="#111" stroke-width="0.45" text-anchor="middle" dominant-baseline="central">600<tspan font-size="14" stroke-width="0.2" dy="-2.5">*</tspan></text>
<text transform="translate(751,722) rotate(14)" font-size="19.5" fill="#111" stroke="#111" stroke-width="0.45" text-anchor="middle" dominant-baseline="central">750<tspan font-size="14" stroke-width="0.2" dy="-2.5">*</tspan></text>
<text transform="translate(824,634) rotate(13)" font-size="19.5" fill="#111" stroke="#111" stroke-width="0.45" text-anchor="middle" dominant-baseline="central">50</text>
<text transform="translate(847.4,656.4) rotate(13)" font-size="19.5" fill="#111" stroke="#111" stroke-width="0.45" text-anchor="middle" dominant-baseline="central">200</text>
<text transform="translate(908.5,652.3) rotate(13)" font-size="19.5" fill="#111" stroke="#111" stroke-width="0.45" text-anchor="middle" dominant-baseline="central">300</text>
<text transform="translate(947.2,678.8) rotate(13)" font-size="19.5" fill="#111" stroke="#111" stroke-width="0.45" text-anchor="middle" dominant-baseline="central">200</text>
<text transform="translate(996,672.7) rotate(13)" font-size="19.5" fill="#111" stroke="#111" stroke-width="0.45" text-anchor="middle" dominant-baseline="central">50</text>
<text transform="translate(885,680.8) rotate(13)" font-size="19.5" fill="#111" stroke="#111" stroke-width="0.45" text-anchor="middle" dominant-baseline="central">400</text>
<text transform="translate(921,765) rotate(14)" font-size="19.5" fill="#111" stroke="#111" stroke-width="0.45" text-anchor="middle" dominant-baseline="central">750<tspan font-size="14" stroke-width="0.2" dy="-2.5">*</tspan></text>
<text transform="translate(973,759) rotate(13)" font-size="19.5" fill="#111" stroke="#111" stroke-width="0.45" text-anchor="middle" dominant-baseline="central">600<tspan font-size="14" stroke-width="0.2" dy="-2.5">*</tspan></text>
<text transform="translate(1161.9,561.3) rotate(-58)" font-size="19.5" fill="#111" stroke="#111" stroke-width="0.45" text-anchor="middle" dominant-baseline="central">50</text>
<text transform="translate(1135.1,602.7) rotate(-58)" font-size="19.5" fill="#111" stroke="#111" stroke-width="0.45" text-anchor="middle" dominant-baseline="central">300</text>
<text transform="translate(1106.8,647.1) rotate(-58)" font-size="19.5" fill="#111" stroke="#111" stroke-width="0.45" text-anchor="middle" dominant-baseline="central">50</text>
<text transform="translate(1173.4,583.6) rotate(-60)" font-size="19.5" fill="#111" stroke="#111" stroke-width="0.45" text-anchor="middle" dominant-baseline="central">200</text>
<text transform="translate(1143.6,633.3) rotate(-60)" font-size="19.5" fill="#111" stroke="#111" stroke-width="0.45" text-anchor="middle" dominant-baseline="central">200</text>
<text transform="translate(1181.8,611.9) rotate(-62)" font-size="19.5" fill="#111" stroke="#111" stroke-width="0.45" text-anchor="middle" dominant-baseline="central">400</text>
<text transform="translate(1201,592) rotate(-82)" font-size="19.5" fill="#111" stroke="#111" stroke-width="0.45" text-anchor="middle" dominant-baseline="central">600<tspan font-size="14" stroke-width="0.2" dy="-2.5">*</tspan></text>
<text transform="translate(1106,698) rotate(8)" font-size="19.5" fill="#111" stroke="#111" stroke-width="0.45" text-anchor="middle" dominant-baseline="central">8</text>
<line x1="977.5" y1="404.0" x2="977.5" y2="427.0" stroke="#2b2b2b" stroke-width="1.1" />
<polygon points="977.5,436.0 974.5,427.0 980.5,427.0" fill="#2b2b2b"/>
<line x1="977.5" y1="437" x2="977.5" y2="485" stroke="#2b2b2b" stroke-width="1.1" stroke-dasharray="5 4"/>
<text transform="translate(968.4,413) rotate(90)" font-size="19" fill="#111" stroke="#111" stroke-width="0.45" text-anchor="middle" dominant-baseline="central">52.947</text>
<path d="M994.3,455 A18.4 8.4 0 1 0 987,466.5" fill="none" stroke="#2b2b2b" stroke-width="1.2"/>
<circle cx="994.5" cy="455" r="2" fill="#2b2b2b"/>
<text x="985" y="470.6" font-size="18" fill="#111" stroke="#111" stroke-width="0.45">1.087</text>
<text x="986" y="489.3" font-size="19" fill="#111" stroke="#111" stroke-width="0.45">47.072</text>
<line x1="1032.4" y1="503.6" x2="1069.2" y2="460.3" stroke="#2b2b2b" stroke-width="1.1" stroke-dasharray="4 3"/>
<path d="M1038.2,477.1 A14.5 15.5 0 1 1 1035.5,498.5" fill="none" stroke="#2b2b2b" stroke-width="1.2"/>
<polygon points="1033.5,496.5 1039.8,498.0 1036.9,502.1" fill="#2b2b2b"/>
<circle cx="1060" cy="471" r="2" fill="#2b2b2b"/>
<text transform="translate(1053.5,466) rotate(-51)" font-size="19" fill="#111" stroke="#111" stroke-width="0.45" text-anchor="middle" dominant-baseline="central">2.201</text>
<line x1="1178" y1="612" x2="1276" y2="631.5" stroke="#2b2b2b" stroke-width="1.1" stroke-dasharray="5 5"/>
<line x1="1276.0" y1="631.5" x2="1325.0" y2="641.5" stroke="#2b2b2b" stroke-width="1.1" />
<polygon points="1333.0,643.0 1322.6,643.9 1323.8,638.0" fill="#2b2b2b"/>
<path d="M1266.5,609.4 C1262,622 1256,648 1259,648.4 C1262,648 1265,630 1266,625" fill="none" stroke="#2b2b2b" stroke-width="1.2"/>
<circle cx="1266.5" cy="609.5" r="2.1" fill="#2b2b2b"/>
<text x="1247" y="619.3" font-size="19" fill="#111" stroke="#111" stroke-width="0.45">1.838</text>
<text transform="translate(1310,633) rotate(11)" font-size="19" fill="#111" stroke="#111" stroke-width="0.45" text-anchor="middle" dominant-baseline="central">23.059</text>
<line x1="403.4" y1="987.1" x2="403.4" y2="933.0" stroke="#0000ff" stroke-width="1.6" />
<polyline points="406.6,939.0 403.4,933.0 400.2,939.0" fill="none" stroke="#0000ff" stroke-width="1.6"/>
<line x1="403.4" y1="987.1" x2="428.2" y2="958.2" stroke="#00e000" stroke-width="1.6" />
<polyline points="426.7,964.8 428.2,958.2 421.9,960.7" fill="none" stroke="#00e000" stroke-width="1.6"/>
<line x1="403.4" y1="987.1" x2="461.8" y2="999.2" stroke="#ff0000" stroke-width="1.6" />
<polyline points="455.3,1001.1 461.8,999.2 456.6,994.8" fill="none" stroke="#ff0000" stroke-width="1.6"/>
<text x="403.4" y="926" font-size="12" fill="#333" text-anchor="middle">Z</text>
<text x="432.4" y="956.5" font-size="12" fill="#333" text-anchor="middle">Y</text>
<text x="473.4" y="1006" font-size="12" fill="#333" text-anchor="middle">X</text>
</svg>
<!--/SCENE-->
<!-- viewport toolbar -->
<div class="a tb" style="left:324px;top:102px;width:40px;height:32px"></div>
<svg class="a" style="left:324px;top:102px" width="40" height="32" viewBox="0 0 40 32"><path d="M15 9.5l-4 3.8 4 3.8" fill="#4d4a4d" stroke="#4d4a4d" stroke-width="1.2"/><path d="M13 13.3h12.2v8.5H13.5" fill="none" stroke="#4d4a4d" stroke-width="2.6"/></svg>
<div class="a" style="left:366px;top:102px;width:40px;height:32px;background:#c8c8c8;border:1px solid #c2c2c2"></div>
<svg class="a" style="left:366px;top:102px" width="40" height="32" viewBox="0 0 40 32"><path d="M24 9l4 3.8-4 3.8z" fill="#adadad" stroke="#adadad" stroke-width="1.2"/><path d="M26 12.8H13.3v8.5h12.2" fill="none" stroke="#adadad" stroke-width="2.6"/></svg>
<div class="a inp" style="left:414px;top:102px;width:80px;height:32px"></div>
<div class="a val" style="left:423px;top:112px">38%</div>
<div class="a" style="left:478px;top:102px;width:16px;height:32px;background:#e6e4e1;border:1px solid #bcb8b2"></div>
<div class="a" style="left:478px;top:117px;width:16px;height:1px;background:#bcb8b2"></div>
<svg class="a" style="left:478px;top:102px" width="16" height="32" viewBox="0 0 16 32"><path d="M5 9h6M8 6v6" stroke="#222" stroke-width="1.15"/><path d="M6.5 25.5h3" stroke="#222" stroke-width="2"/></svg>
<div class="a tb" style="left:502px;top:102px;width:40px;height:32px"></div>
<svg class="a" style="left:502px;top:102px" width="40" height="32" viewBox="0 0 40 32"><circle cx="18.3" cy="14.8" r="4.4" fill="none" stroke="#4d4a4d" stroke-width="2.2"/><path d="M21.3 18l3.6 3.6" stroke="#4d4a4d" stroke-width="2.6"/></svg>
<div class="a tb" style="left:550px;top:102px;width:40px;height:32px"></div>
<svg class="a" style="left:550px;top:102px" width="40" height="32" viewBox="0 0 40 32"><circle cx="19.5" cy="16" r="5" fill="none" stroke="#4d4a4d" stroke-width="1.5"/><circle cx="19.5" cy="16" r="2.6" fill="#4d4a4d"/><path d="M19.5 8.5v3M19.5 20.5v3M12 16h3M24 16h3" stroke="#4d4a4d" stroke-width="1.5"/></svg>
<div class="a tb" style="left:598px;top:102px;width:40px;height:32px"></div>
<svg class="a" style="left:598px;top:102px" width="40" height="32" viewBox="0 0 40 32"><path d="M12.3 16c2-3.2 4.4-4.6 7.3-4.6s5.3 1.4 7.3 4.6c-2 3.2-4.4 4.6-7.3 4.6s-5.3-1.4-7.3-4.6z" fill="#4d4a4d"/><circle cx="19.6" cy="16" r="2.6" fill="#e6e4e1"/><circle cx="19.6" cy="16" r="1.3" fill="#4d4a4d"/></svg>
<div class="a dd" style="left:642px;top:102px;width:150px;height:32px"></div>
<div class="a val" style="left:651px;top:111px;font-weight:700;color:#4d4a4d">Solid 3D</div>
<svg class="a" style="left:773px;top:114px" width="12" height="8" viewBox="0 0 12 8"><path d="M1.5 2h9L6 6.5z" fill="#4d4a4d"/></svg>
<div class="a" style="left:324px;top:148px;width:124px;height:32px;background:#4d4a4d;border:1px solid #2e2b2e"></div>
<div class="a val" style="left:324px;top:157px;width:124px;text-align:center;font-weight:700;color:#fff">Change to 2D</div>
<div class="a tb" style="left:324px;top:1024px;width:30px;height:24px;background:#e6e4e1"></div>
<svg class="a" style="left:324px;top:1024px" width="30" height="22" viewBox="0 0 30 22"><path d="M18 12.5l-4 4 4 4" fill="none" stroke="#4d4a4d" stroke-width="2.4"/></svg>

<!-- scrollbar -->
<div class="a" style="left:306px;top:82px;width:16px;height:963px;background:#f1f1f1"></div>
<div class="a" style="left:308px;top:99px;width:13px;height:845px;background:#c1c1c1"></div>
<svg class="a" style="left:306px;top:82px" width="16" height="16" viewBox="0 0 16 16"><path d="M4.5 11h7L8 6.5z" fill="#a3a3a3"/></svg>

</body></html>
